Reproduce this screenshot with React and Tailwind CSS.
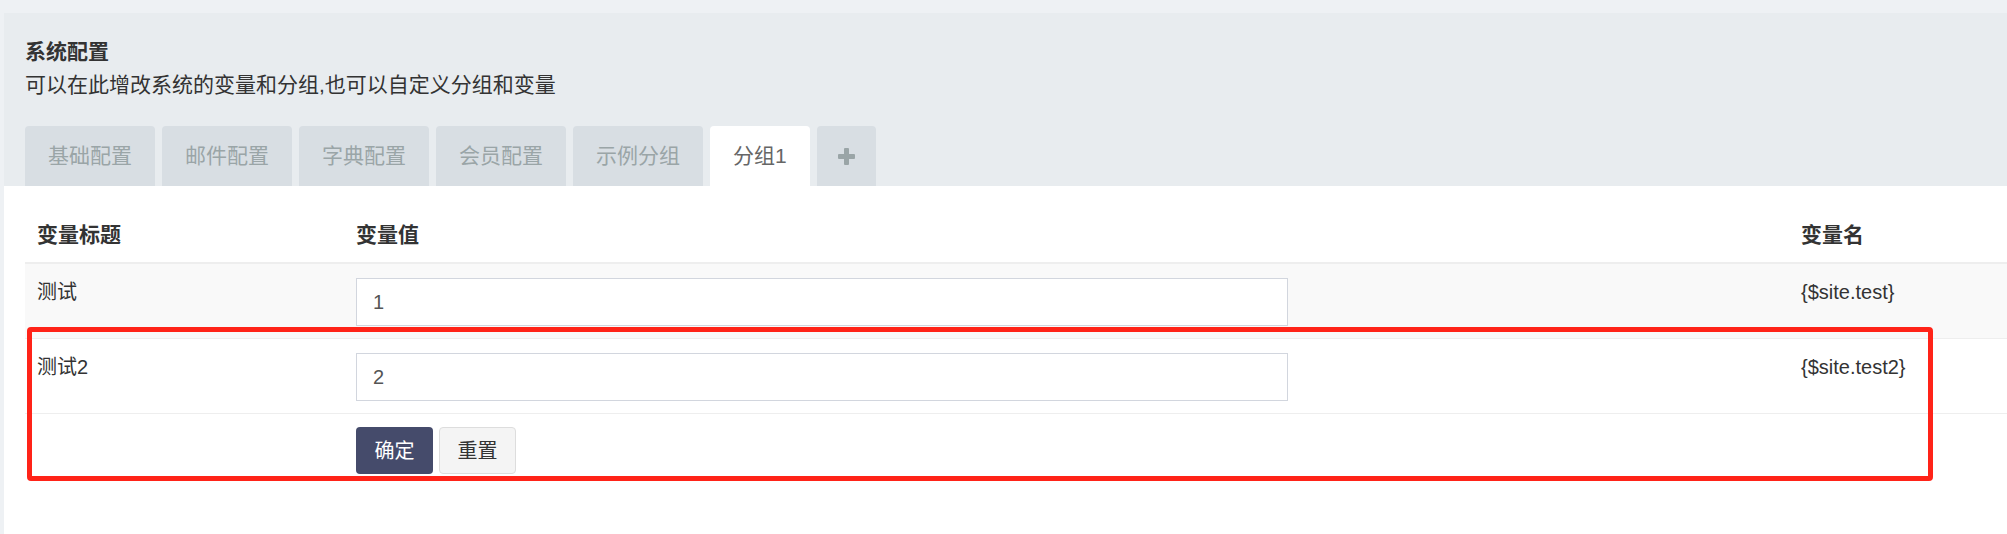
import { useState } from "react";

const tabs = ["基础配置", "邮件配置", "字典配置", "会员配置", "示例分组", "分组1"];

function PlusIcon() {
  return (
    <svg width="17" height="17" viewBox="0 0 17 17" fill="#9aa5a7">
      <rect x="6" y="0" width="5" height="17" rx="1" />
      <rect x="0" y="6" width="17" height="5" rx="1" />
    </svg>
  );
}

function App() {
  const [active, setActive] = useState("分组1");
  const [rows, setRows] = useState([
    { title: "测试", value: "1", name: "{$site.test}" },
    { title: "测试2", value: "2", name: "{$site.test2}" },
  ]);

  return (
    <div className="min-h-screen bg-[#eef1f4] pt-[13px] pl-[4px] font-['Liberation_Sans','Noto_Sans_CJK_SC',sans-serif] text-[#333]">
      <div className="relative min-h-[521px] bg-white">
        <div className="bg-[#e8ecef] pl-[21px] pt-[25px]">
          <h3 className="text-[21px] font-bold leading-[28px]">系统配置</h3>
          <p className="mt-[4px] text-[21px] leading-[30px]">可以在此增改系统的变量和分组,也可以自定义分组和变量</p>
          <div className="mt-[26px] flex gap-[7px]">
            {tabs.map((t) => (
              <button
                key={t}
                onClick={() => setActive(t)}
                className={`h-[60px] rounded-t-[4px] px-[23px] text-[21px] ${active === t ? "bg-white text-[#666]" : "bg-[#d8dee3] text-[#9aa5a7]"}`}
              >
                {t}
              </button>
            ))}
            <button className="flex h-[60px] items-center rounded-t-[4px] bg-[#d8dee3] px-[21px]">
              <PlusIcon />
            </button>
          </div>
        </div>

        <div className="pl-[21px] pt-[20px]">
          <table className="w-full table-fixed border-collapse">
            <colgroup>
              <col className="w-[319px]" />
              <col className="w-[1445px]" />
              <col />
            </colgroup>
            <thead>
              <tr className="border-b-2 border-[#eeeeee]">
                <th className="pl-[12px] pt-[15px] pb-[13px] text-left text-[21px] font-bold leading-[28px]">变量标题</th>
                <th className="pl-[12px] pt-[15px] pb-[13px] text-left text-[21px] font-bold leading-[28px]">变量值</th>
                <th className="pl-[12px] pt-[15px] pb-[13px] text-left text-[21px] font-bold leading-[28px]">变量名</th>
              </tr>
            </thead>
            <tbody>
              {rows.map((r, i) => (
                <tr key={r.name} className={`border-b border-[#eeeeee] ${i % 2 === 0 ? "bg-[#f9f9f9]" : "bg-white"}`}>
                  <td className="pl-[12px] pt-[14px] pb-[12px] align-top text-[20px] leading-[28px]">{r.title}</td>
                  <td className="pl-[12px] pt-[14px] pb-[12px] align-top">
                    <input
                      type="text"
                      value={r.value}
                      onChange={(e) => setRows(rows.map((x, j) => (j === i ? { ...x, value: e.target.value } : x)))}
                      className="h-[48px] w-[932px] border border-[#d2d6de] bg-white pl-[16px] text-[20px] text-[#555] outline-none"
                    />
                  </td>
                  <td className="pl-[12px] pt-[14px] pb-[12px] align-top text-[20px] leading-[28px]">{r.name}</td>
                </tr>
              ))}
              <tr>
                <td></td>
                <td className="pl-[12px] pt-[13px] pb-[13px]">
                  <div className="flex gap-[6px]">
                    <button className="h-[47px] w-[77px] rounded-[4px] bg-[#454b6b] text-[20px] text-white">确定</button>
                    <button className="h-[47px] w-[77px] rounded-[4px] border border-[#dddddd] bg-[#f4f4f4] text-[20px] text-[#333]">重置</button>
                  </div>
                </td>
                <td></td>
              </tr>
            </tbody>
          </table>
        </div>

        {/* annotation box */}
        <div className="pointer-events-none absolute left-[23px] top-[314px] h-[154px] w-[1906px] rounded-[4px] border-[5px] border-[#ff2318]"></div>
      </div>
    </div>
  );
}

export default App;
